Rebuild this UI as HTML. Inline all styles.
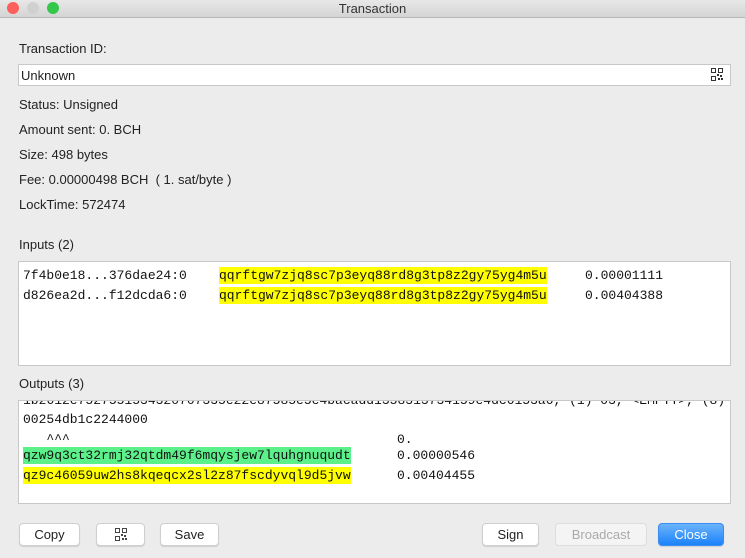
<!DOCTYPE html>
<html><head><meta charset="utf-8"><style>
body{margin:0;width:745px;height:558px;background:#ececec;font-family:"Liberation Sans",sans-serif;font-size:13px;color:#222;position:relative;overflow:hidden}
.a{position:absolute;white-space:nowrap}
.tb{position:absolute;left:0;top:0;width:745px;height:17px;background:linear-gradient(#e8e8e8,#d4d4d4);border-bottom:1px solid #b8b8b8;text-align:center;font-size:13px;line-height:17px;color:#333}
.dot{position:absolute;top:2px;width:12px;height:12px;border-radius:50%}
.box{position:absolute;background:#fff;border:1px solid #c8c8c8;overflow:hidden}
.m{font-family:"Liberation Mono",monospace;font-size:13px;color:#111;position:absolute;white-space:nowrap;line-height:17px}
.y{background:#ffff00}.g{background:#5cf08a}
.btn{position:absolute;top:523px;height:21px;background:#fff;border:1px solid #cfcfcf;border-radius:4px;box-shadow:0 1px 1px rgba(0,0,0,.12);text-align:center;line-height:21px;font-size:13px;color:#222}
</style></head><body>
<div class="tb">Transaction</div>
<div class="dot" style="left:7px;background:#fc605c"></div>
<div class="dot" style="left:27px;background:#d0d0d0"></div>
<div class="dot" style="left:47px;background:#34c84a"></div>
<div class="a" style="left:19px;top:41px">Transaction ID:</div>
<div class="box" style="left:18px;top:64px;width:711px;height:20px"><span class="a" style="left:2px;top:3px">Unknown</span>
<svg class="a" style="left:692px;top:3px" width="12" height="13" viewBox="0 0 12 13"><g fill="none" stroke="#333"><rect x=".5" y=".5" width="4" height="4"/><rect x="7.5" y=".5" width="4" height="4"/><rect x=".5" y="8.5" width="4" height="4"/></g><g fill="#333"><rect x="6" y="6" width="2" height="2"/><rect x="9" y="7" width="2" height="2"/><rect x="7" y="10" width="2" height="2"/><rect x="10" y="10" width="2" height="2"/></g></svg></div>
<div class="a" style="left:19px;top:97px">Status: Unsigned</div>
<div class="a" style="left:19px;top:122px">Amount sent: 0. BCH</div>
<div class="a" style="left:19px;top:147px">Size: 498 bytes</div>
<div class="a" style="left:19px;top:172px">Fee: 0.00000498 BCH &nbsp;( 1. sat/byte )</div>
<div class="a" style="left:19px;top:197px">LockTime: 572474</div>
<div class="a" style="left:19px;top:237px">Inputs (2)</div>
<div class="box" style="left:18px;top:261px;width:711px;height:103px">
<div class="m" style="left:4px;top:5px">7f4b0e18...376dae24:0</div><div class="m y" style="left:200px;top:5px">qqrftgw7zjq8sc7p3eyq88rd8g3tp8z2gy75yg4m5u</div><div class="m" style="left:566px;top:5px">0.00001111</div>
<div class="m" style="left:4px;top:25px">d826ea2d...f12dcda6:0</div><div class="m y" style="left:200px;top:25px">qqrftgw7zjq8sc7p3eyq88rd8g3tp8z2gy75yg4m5u</div><div class="m" style="left:566px;top:25px">0.00404388</div>
</div>
<div class="a" style="left:19px;top:376px">Outputs (3)</div>
<div class="box" style="left:18px;top:400px;width:711px;height:102px">
<div class="m" style="left:4px;top:-9px">1b2612e7527551534320707335e22e87585e5e4bacadd1358313734159e4dc6153a6, (1) 03, &lt;EMPTY&gt;, (8)</div>
<div class="m" style="left:4px;top:10px">00254db1c2244000</div>
<div class="m" style="left:4px;top:30px">&nbsp;&nbsp;&nbsp;^^^</div><div class="m" style="left:378px;top:30px">0.</div>
<div class="m g" style="left:4px;top:46px">qzw9q3ct32rmj32qtdm49f6mqysjew7lquhgnuqudt</div><div class="m" style="left:378px;top:46px">0.00000546</div>
<div class="m y" style="left:4px;top:66px">qz9c46059uw2hs8kqeqcx2sl2z87fscdyvql9d5jvw</div><div class="m" style="left:378px;top:66px">0.00404455</div>
</div>
<div class="btn" style="left:19px;width:59px">Copy</div>
<div class="btn" style="left:96px;width:47px"><svg style="margin-top:4px" width="12" height="13" viewBox="0 0 12 13"><g fill="none" stroke="#444"><rect x=".5" y=".5" width="4" height="4"/><rect x="7.5" y=".5" width="4" height="4"/><rect x=".5" y="8.5" width="4" height="4"/></g><g fill="#444"><rect x="6" y="6" width="2" height="2"/><rect x="9" y="7" width="2" height="2"/><rect x="7" y="10" width="2" height="2"/><rect x="10" y="10" width="2" height="2"/></g></svg></div>
<div class="btn" style="left:160px;width:57px">Save</div>
<div class="btn" style="left:482px;width:55px">Sign</div>
<div class="btn" style="left:555px;width:90px;background:#f4f4f4;color:#aaa;box-shadow:none;border-color:#ddd">Broadcast</div>
<div class="btn" style="left:658px;width:64px;background:linear-gradient(#6cb3fa,#1a82fb);border-color:#3b8ef0;color:#fff">Close</div>
</body></html>
